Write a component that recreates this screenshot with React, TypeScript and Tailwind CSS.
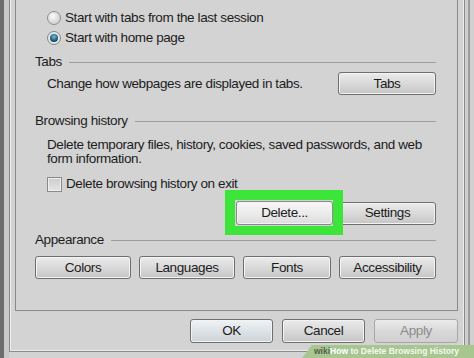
import React from "react";

function Btn({
  children,
  className = "",
}: {
  children: React.ReactNode;
  className?: string;
}) {
  return (
    <div
      className={`flex items-center justify-center rounded-[3px] border border-[#6f6f6f] bg-linear-to-b from-[#ebebeb] via-[#d9d9d9] to-[#c6c6c6] shadow-[inset_0_0_0_1px_#f3f3f3] ${className}`}
    >
      {children}
    </div>
  );
}

function Header({ label }: { label: string }) {
  return (
    <div className="flex h-[20px] items-center gap-[7px]">
      <span className="whitespace-nowrap">{label}</span>
      <div className="h-px flex-1 bg-[#9d9d9d]" />
    </div>
  );
}

export default function App() {
  return (
    <div className="relative flex h-[358px] w-[474px] overflow-hidden bg-[#d3d3d3] font-['Liberation_Sans',Arial,sans-serif] text-[13.5px] leading-[20px] tracking-[-0.4px] text-[#1c1c1c]">
      <div className="h-full w-[4px] bg-[#6d6d6d]" />
      <div className="h-full w-[5px] bg-[#c9c9c9]" />

      <div className="flex h-[352px] w-[456px] flex-col border-x border-b border-[#8a8a8a] pl-[5px] pr-[6px] shadow-[inset_1px_0_0_#ededed,inset_-1px_0_0_#ededed,inset_0_-1px_0_#ededed]">
        {/* Tab page */}
        <div className="flex h-[311px] w-[443px] flex-col border-x border-b border-[#8a8a8a] pl-[19px] pr-[21px] pt-[8px]">
          <div className="ml-[12px] flex h-[20px] items-center gap-[4px]">
            <span className="h-[14px] w-[14px] rounded-full border border-[#8e8e8e] bg-[radial-gradient(circle_at_40%_35%,#fafafa,#c2c2c2)]" />
            <span className="whitespace-nowrap">Start with tabs from the last session</span>
          </div>
          <div className="ml-[12px] flex h-[20px] items-center gap-[4px]">
            <span className="flex h-[14px] w-[14px] items-center justify-center rounded-full border border-[#7b8790] bg-[#e6e6e6]">
              <span className="h-[8px] w-[8px] rounded-full bg-[radial-gradient(circle_at_50%_35%,#6cc0e0,#0f3d57_75%)]" />
            </span>
            <span className="whitespace-nowrap">Start with home page</span>
          </div>

          <div className="mt-[4px]">
            <Header label="Tabs" />
          </div>
          <div className="ml-[12px] flex h-[23px] items-center justify-between">
            <span className="whitespace-nowrap">Change how webpages are displayed in tabs.</span>
            <Btn className="h-[23px] w-[98px]">Tabs</Btn>
          </div>

          <div className="mt-[16px]">
            <Header label="Browsing history" />
          </div>
          <div className="ml-[12px] mt-[7px] whitespace-nowrap leading-[14px]">
            Delete temporary files, history, cookies, saved passwords, and web
            <br />
            form information.
          </div>
          <div className="ml-[12px] mt-[8px] flex h-[20px] items-center gap-[4px]">
            <span className="h-[15px] w-[15px] border border-[#8a8a8a] bg-linear-to-b from-[#cdcdcd] to-[#e4e4e4] shadow-[inset_0_0_0_1px_#efefef]" />
            <span className="whitespace-nowrap">Delete browsing history on exit</span>
          </div>
          <div className="mt-[7px] flex h-[24px] items-center justify-end gap-[6px]">
            <div className="relative">
              <Btn className="relative z-20 h-[24px] w-[97px] border-[#8a8a8a] from-[#f7f7f7] via-[#ececec] to-[#dcdcdc]">
                Delete...
              </Btn>
              <div className="absolute left-[-11px] top-[-11px] z-30 h-[45px] w-[118px] border-[10px] border-b-[9px] border-[#3de43a]" />
            </div>
            <Btn className="h-[23px] w-[97px]">Settings</Btn>
          </div>

          <div className="mt-[5px]">
            <Header label="Appearance" />
          </div>
          <div className="mt-[6px] flex h-[23px] items-center justify-between">
            <Btn className="h-[23px] w-[96px]">Colors</Btn>
            <Btn className="h-[23px] w-[96px]">Languages</Btn>
            <Btn className="h-[23px] w-[88px]">Fonts</Btn>
            <Btn className="h-[23px] w-[97px]">Accessibility</Btn>
          </div>
        </div>

        {/* Dialog buttons */}
        <div className="mt-[8px] flex h-[24px] justify-end gap-[9px] pr-0">
          <Btn className="h-[24px] w-[83px] border-[#3f86b8] from-[#eef3f6] via-[#dde3e7] to-[#ccd2d6] shadow-[inset_0_0_0_1px_#bfe0f5]">
            OK
          </Btn>
          <Btn className="h-[24px] w-[83px]">Cancel</Btn>
          <Btn className="h-[24px] w-[84px] border-[#a8a8a8] from-[#dcdcdc] via-[#d6d6d6] to-[#d0d0d0] text-[#8c8c8c] shadow-none">
            Apply
          </Btn>
        </div>
      </div>

      <div className="h-full w-[3px] bg-[#cfcfcf]" />
      <div className="h-full w-[2px] bg-[#9c9c9c]" />
      <div className="h-full w-[4px] bg-[#d0d0d0]" />

      {/* watermark */}
      <div className="absolute bottom-0 right-0 flex h-[13px] w-[172px] items-center bg-[#a7c690] pl-[12px] font-['Liberation_Sans',sans-serif] text-[8.5px] font-bold leading-none tracking-normal [clip-path:polygon(10px_0,100%_0,100%_100%,0_100%)]">
        <span className="text-[#56604c]">wiki</span>
        <span className="text-white">How</span>
        <span className="whitespace-pre text-[#f4f8f0]"> to Delete Browsing History</span>
      </div>
    </div>
  );
}
